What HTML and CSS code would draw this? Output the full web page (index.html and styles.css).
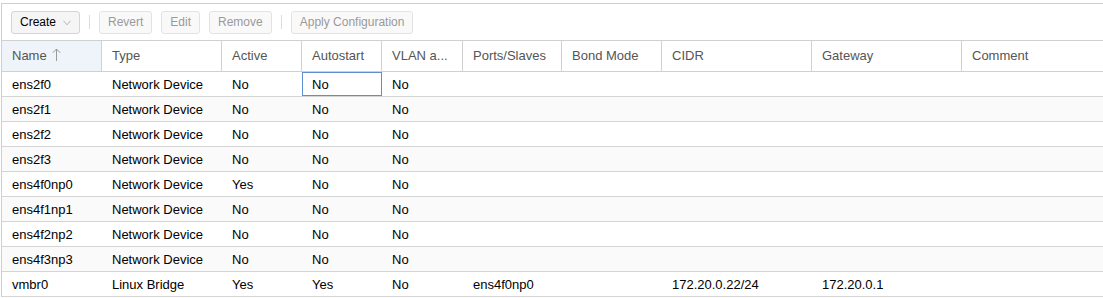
FILE: index.html
```html
<!DOCTYPE html>
<html>
<head>
<meta charset="utf-8">
<link rel="stylesheet" href="styles.css">
</head>
<body>
<div class="panel">
  <div class="toolbar">
    <button class="btn btn-active">Create <svg class="chev" width="9" height="6" viewBox="0 0 9 6"><path d="M0.5 0.5 L4.5 5 L8.5 0.5" fill="none" stroke="#aaa" stroke-width="1"/></svg></button>
    <span class="sep"></span>
    <button class="btn">Revert</button>
    <button class="btn">Edit</button>
    <button class="btn">Remove</button>
    <span class="sep"></span>
    <button class="btn">Apply Configuration</button>
  </div>
  <div class="grid">
    <div class="row head">
      <div class="hc sorted">Name <svg class="sort" width="9" height="13" viewBox="0 0 9 13"><path d="M4.5 1 V13 M0.8 4.8 L4.5 1 L8.2 4.8" fill="none" stroke="#999" stroke-width="1"/></svg></div>
      <div class="hc">Type</div>
      <div class="hc">Active</div>
      <div class="hc">Autostart</div>
      <div class="hc" title="VLAN aware">VLAN a...</div>
      <div class="hc">Ports/Slaves</div>
      <div class="hc">Bond Mode</div>
      <div class="hc">CIDR</div>
      <div class="hc">Gateway</div>
      <div class="hc last">Comment</div>
    </div>
    <div class="row"><div class="c">ens2f0</div><div class="c">Network Device</div><div class="c">No</div><div class="c focus">No</div><div class="c">No</div><div class="c"></div><div class="c"></div><div class="c"></div><div class="c"></div><div class="c"></div></div>
    <div class="row alt"><div class="c">ens2f1</div><div class="c">Network Device</div><div class="c">No</div><div class="c">No</div><div class="c">No</div><div class="c"></div><div class="c"></div><div class="c"></div><div class="c"></div><div class="c"></div></div>
    <div class="row"><div class="c">ens2f2</div><div class="c">Network Device</div><div class="c">No</div><div class="c">No</div><div class="c">No</div><div class="c"></div><div class="c"></div><div class="c"></div><div class="c"></div><div class="c"></div></div>
    <div class="row alt"><div class="c">ens2f3</div><div class="c">Network Device</div><div class="c">No</div><div class="c">No</div><div class="c">No</div><div class="c"></div><div class="c"></div><div class="c"></div><div class="c"></div><div class="c"></div></div>
    <div class="row"><div class="c">ens4f0np0</div><div class="c">Network Device</div><div class="c">Yes</div><div class="c">No</div><div class="c">No</div><div class="c"></div><div class="c"></div><div class="c"></div><div class="c"></div><div class="c"></div></div>
    <div class="row alt"><div class="c">ens4f1np1</div><div class="c">Network Device</div><div class="c">No</div><div class="c">No</div><div class="c">No</div><div class="c"></div><div class="c"></div><div class="c"></div><div class="c"></div><div class="c"></div></div>
    <div class="row"><div class="c">ens4f2np2</div><div class="c">Network Device</div><div class="c">No</div><div class="c">No</div><div class="c">No</div><div class="c"></div><div class="c"></div><div class="c"></div><div class="c"></div><div class="c"></div></div>
    <div class="row alt"><div class="c">ens4f3np3</div><div class="c">Network Device</div><div class="c">No</div><div class="c">No</div><div class="c">No</div><div class="c"></div><div class="c"></div><div class="c"></div><div class="c"></div><div class="c"></div></div>
    <div class="row"><div class="c">vmbr0</div><div class="c">Linux Bridge</div><div class="c">Yes</div><div class="c">Yes</div><div class="c">No</div><div class="c">ens4f0np0</div><div class="c"></div><div class="c">172.20.0.22/24</div><div class="c">172.20.0.1</div><div class="c"></div></div>
  </div>
</div>
</body>
</html>
```
FILE: styles.css
```css
html, body {
  margin: 0;
  padding: 0;
  background: #fff;
  font-family: "Liberation Sans", Arial, sans-serif;
}
.panel {
  margin: 3px 0 0 1px;
  border-top: 1px solid #cfcfcf;
  border-left: 1px solid #cfcfcf;
}
.toolbar {
  height: 36px;
  display: flex;
  align-items: center;
  padding-left: 9px;
  box-sizing: border-box;
  gap: 9px;
}
.btn {
  height: 23px;
  padding: 0 8px;
  font-family: "Liberation Sans", Arial, sans-serif;
  font-size: 12px;
  color: #9a9a9a;
  background: #f9f9f9;
  border: 1px solid #e3e3e3;
  border-radius: 3px;
  display: flex;
  align-items: center;
  box-sizing: border-box;
}
.btn-active {
  color: #000;
  background: #f5f5f5;
  border-color: #d4d4d4;
  width: 69px;
  padding-left: 8px;
}
.chev {
  margin-left: 7px;
  margin-top: 1px;
}
.sep {
  width: 1px;
  height: 14px;
  background: #dcdcdc;
}
.grid {
  border-top: 1px solid #d0d0d0;
}
.row {
  display: grid;
  grid-template-columns: 100px 120px 80px 80px 81px 99px 100px 150px 150px 1fr;
  height: 25px;
  border-bottom: 1px solid #d4d4d4;
  box-sizing: border-box;
  font-size: 13px;
  color: #000;
}
.row.alt {
  background: #fafafa;
}
.row.head {
  height: 31px;
  border-bottom: 1px solid #d0d0d0;
}
.hc {
  border-right: 1px solid #d0d0d0;
  padding: 0 10px 2px;
  color: #555;
  white-space: nowrap;
  display: flex;
  align-items: center;
}
.hc.last {
  border-right: none;
}
.hc.sorted {
  background: #eef4fa;
}
.sort {
  margin-left: 5px;
  margin-top: -1px;
}
.c {
  padding: 0 10px;
  line-height: 25px;
  white-space: nowrap;
  overflow: hidden;
  position: relative;
}
.c.focus::after {
  content: "";
  position: absolute;
  left: 0;
  right: 0;
  top: 0;
  bottom: 0;
  border: 1px solid #5d8fcf;
}
```
